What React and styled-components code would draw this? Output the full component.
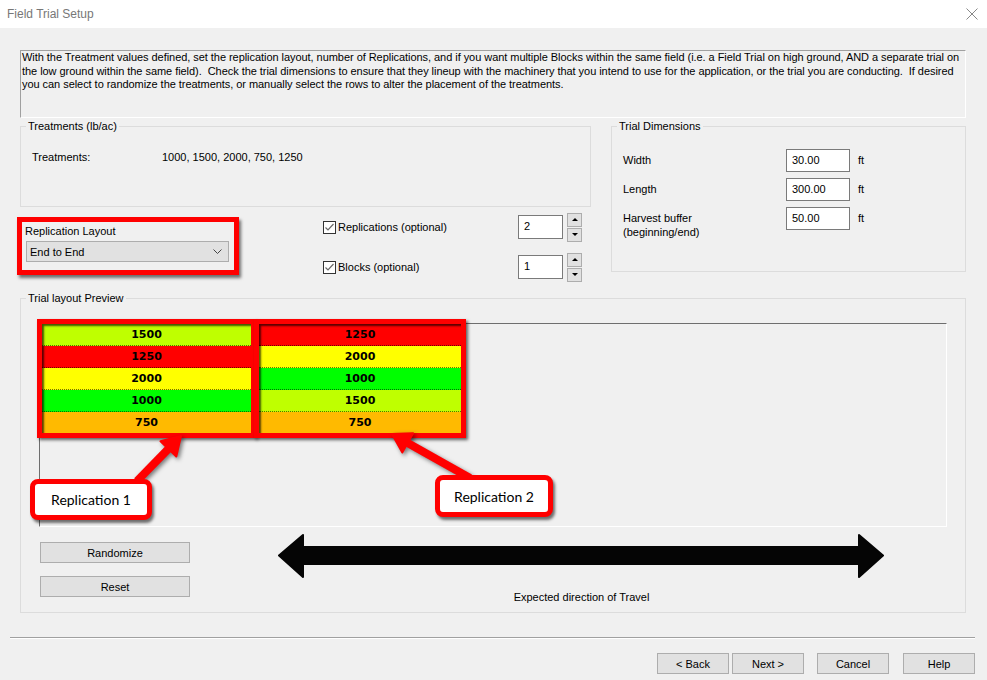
import React from "react";
import styled, { createGlobalStyle } from "styled-components";

const Global = createGlobalStyle`
  html, body { margin: 0; padding: 0; background: #f0f0f0; }
  body { font-family: "Liberation Sans", Arial, sans-serif; font-size: 11px; color: #000; }
  * { box-sizing: border-box; }
`;

const Window = styled.div`
  position: relative;
  width: 987px;
  height: 680px;
  background: #f0f0f0;
  overflow: hidden;
  display: flex;
  flex-direction: column;
`;

const TitleBar = styled.div`
  height: 28px;
  background: #fff;
  display: flex;
  align-items: center;
  justify-content: space-between;
  padding: 0 9px 0 7px;
  font-size: 12px;
  color: #777;
`;

const Body = styled.div`
  padding: 22px 21px 0 20px;
`;

const Description = styled.div`
  height: 68px;
  border-top: 1px solid #a0a0a0;
  border-left: 1px solid #a0a0a0;
  border-right: 1px solid #fff;
  border-bottom: 1px solid #fff;
  padding: 0 1px;
  line-height: 13.5px;
  white-space: pre;
  font-size: 11px;
  letter-spacing: -0.05px;
`;

const TopSection = styled.div`
  display: flex;
  gap: 20px;
  margin-top: 1px;
`;

const LeftCol = styled.div`
  width: 571px;
  display: flex;
  flex-direction: column;
`;

const Group = styled.fieldset`
  margin: 0;
  padding: 0;
  min-width: 0;
  border: 1px solid #dcdcdc;
  width: ${(p) => p.$w}px;
  height: ${(p) => p.$h}px;
`;

const Legend = styled.legend`
  margin-left: 5px;
  padding: 0 2px;
  line-height: 14px;
  font-size: 11px;
`;

const TreatRow = styled.div`
  display: flex;
  margin: 17px 0 0 11px;
  line-height: 14px;
`;

const TreatLabel = styled.div`
  width: 130px;
`;

const OptionsRow = styled.div`
  display: flex;
  align-items: flex-start;
  margin-top: 5px;
`;

const LayoutFrame = styled.div`
  margin: 5px 0 0 -3px;
  width: 222px;
  height: 58px;
  border: 5px solid #f00;
  box-shadow: 2px 3px 3px rgba(0, 0, 0, 0.55);
  padding: 2px 0 0 3px;
`;

const FieldLabel = styled.div`
  line-height: 14px;
`;

const Combo = styled.div`
  margin: 3px 0 0 1px;
  width: 203px;
  height: 21px;
  background: #e1e1e1;
  border: 1px solid #adadad;
  display: flex;
  align-items: center;
  justify-content: space-between;
  padding: 0 6px 0 3px;
`;

const OptionList = styled.div`
  margin-left: 84px;
  display: flex;
  flex-direction: column;
  gap: 10px;
`;

const OptionRow = styled.div`
  display: flex;
  align-items: center;
  height: 30px;
`;

const CheckLabel = styled.label`
  width: 195px;
  display: flex;
  align-items: center;
  gap: 2px;
  line-height: 14px;
`;

const CheckBox = styled.span`
  width: 13px;
  height: 13px;
  border: 1px solid #333;
  background: #fff;
  display: inline-flex;
  align-items: center;
  justify-content: center;
`;

const SpinInput = styled.div`
  width: 45px;
  height: 24px;
  background: #fff;
  border: 1px solid #7a7a7a;
  padding: 3px 0 0 5px;
  line-height: 14px;
`;

const SpinButtons = styled.div`
  margin-left: 4px;
  display: flex;
  flex-direction: column;
  gap: 1px;
`;

const SpinBtn = styled.div`
  width: 15px;
  height: 14px;
  background: #e1e1e1;
  border: 1px solid #adadad;
  display: flex;
  align-items: center;
  justify-content: center;
`;

const Tri = styled.span`
  width: 0;
  height: 0;
  border-left: 3px solid transparent;
  border-right: 3px solid transparent;
  ${(p) => (p.$down ? "border-top: 3px solid #000;" : "border-bottom: 3px solid #000;")}
`;

const DimRows = styled.div`
  margin: 16px 0 0 11px;
  display: flex;
  flex-direction: column;
  gap: 6px;
`;

const DimRow = styled.div`
  display: flex;
  align-items: flex-start;
`;

const DimLabel = styled.div`
  width: 163px;
  padding-top: 4px;
  line-height: 14px;
`;

const DimInput = styled.div`
  width: 64px;
  height: 23px;
  background: #fff;
  border: 1px solid #7a7a7a;
  padding: 3px 0 0 5px;
  line-height: 14px;
`;

const Unit = styled.div`
  margin-left: 8px;
  padding-top: 4px;
  line-height: 14px;
`;

const PreviewGroup = styled(Group)`
  margin-top: 9px;
`;

const Panel = styled.div`
  margin: 18px 0 0 18px;
  width: 908px;
  height: 204px;
  border-top: 1px solid #6e6e6e;
  border-left: 1px solid #6e6e6e;
  border-right: 1px solid #fff;
  border-bottom: 1px solid #fff;
  padding: 0 0 0 2px;
  display: flex;
  gap: 8px;
  align-items: flex-start;
`;

const RepColumn = styled.div`
  position: relative;
  width: ${(p) => p.$w}px;
  display: flex;
  flex-direction: column;
  &::after {
    content: "";
    position: absolute;
    top: -5px;
    left: -5px;
    right: -5px;
    bottom: -4px;
    border: 5px solid #f00;
    box-shadow: 2px 2px 3px rgba(0, 0, 0, 0.6), inset 2px 2px 2px rgba(0, 0, 0, 0.65);
    pointer-events: none;
  }
`;

const Cell = styled.div`
  height: 22px;
  line-height: 21px;
  text-align: center;
  background: ${(p) => p.$bg};
  border-bottom: 1px dotted rgba(0, 0, 0, 0.55);
  font-family: "DejaVu Sans", Verdana, sans-serif;
  font-weight: bold;
  font-size: 11px;
`;

const BottomArea = styled.div`
  display: flex;
  align-items: flex-start;
  margin: 6px 0 0 18px;
`;

const ActionCol = styled.div`
  margin: 9px 0 0 1px;
  display: flex;
  flex-direction: column;
  gap: 13px;
`;

const Button = styled.button`
  width: ${(p) => p.$w || 72}px;
  height: 21px;
  margin: 0;
  padding: 0;
  background: #e1e1e1;
  border: 1px solid #adadad;
  font-family: "Liberation Sans", Arial, sans-serif;
  font-size: 11px;
  color: #000;
`;

const TravelCol = styled.div`
  margin-left: 87px;
  display: flex;
  flex-direction: column;
  align-items: center;
`;

const TravelLabel = styled.div`
  margin-top: 11px;
  line-height: 14px;
`;

const Footer = styled.div`
  margin-top: 24px;
  padding: 0 12px 0 10px;
`;

const Separator = styled.div`
  height: 2px;
  border-top: 1px solid #a0a0a0;
  border-bottom: 1px solid #fff;
`;

const FooterButtons = styled.div`
  margin-top: 14px;
  display: flex;
  justify-content: flex-end;
`;

const Spacer = styled.div`
  width: ${(p) => p.$w}px;
`;

const Callout = styled.div`
  position: absolute;
  left: ${(p) => p.$x}px;
  top: ${(p) => p.$y}px;
  width: ${(p) => p.$w}px;
  height: ${(p) => p.$h}px;
  background: #fff;
  border: 5px solid #f00;
  border-radius: 8px;
  box-shadow: 2px 3px 3px rgba(0, 0, 0, 0.55);
  display: flex;
  align-items: center;
  justify-content: center;
  font-family: Lato, "Open Sans", sans-serif;
  font-size: 14px;
`;

const Overlay = styled.svg`
  position: absolute;
  left: 0;
  top: 0;
  pointer-events: none;
  filter: drop-shadow(2px 2px 2px rgba(0, 0, 0, 0.5));
`;

const rep1 = [
  ["1500", "#bfff00"],
  ["1250", "#ff0000"],
  ["2000", "#ffff00"],
  ["1000", "#00ff00"],
  ["750", "#ffba00"],
];
const rep2 = [
  ["1250", "#ff0000"],
  ["2000", "#ffff00"],
  ["1000", "#00ff00"],
  ["1500", "#bfff00"],
  ["750", "#ffba00"],
];

const Check = () => (
  <CheckBox>
    <svg width="11" height="11" viewBox="0 0 11 11">
      <polyline points="1.5,5.5 4,8 9.5,2" fill="none" stroke="#6a6a6a" strokeWidth="1.2" />
    </svg>
  </CheckBox>
);

const Spinner = ({ value }) => (
  <>
    <SpinInput>{value}</SpinInput>
    <SpinButtons>
      <SpinBtn>
        <Tri />
      </SpinBtn>
      <SpinBtn>
        <Tri $down />
      </SpinBtn>
    </SpinButtons>
  </>
);

export default function App() {
  return (
    <>
      <Global />
      <Window>
        <TitleBar>
          <span>Field Trial Setup</span>
          <svg width="12" height="12" viewBox="0 0 12 12">
            <path d="M0.5 0.5 L11.5 11.5 M11.5 0.5 L0.5 11.5" stroke="#888" strokeWidth="1" />
          </svg>
        </TitleBar>
        <Body>
          <Description>
            {"With the Treatment values defined, set the replication layout, number of Replications, and if you want multiple Blocks within the same field (i.e. a Field Trial on high ground, AND a separate trial on\n" +
              "the low ground within the same field).  Check the trial dimensions to ensure that they lineup with the machinery that you intend to use for the application, or the trial you are conducting.  If desired\n" +
              "you can select to randomize the treatments, or manually select the rows to alter the placement of the treatments."}
          </Description>
          <TopSection>
            <LeftCol>
              <Group $w={571} $h={88}>
                <Legend>Treatments (lb/ac)</Legend>
                <TreatRow>
                  <TreatLabel>Treatments:</TreatLabel>
                  <div>1000, 1500, 2000, 750, 1250</div>
                </TreatRow>
              </Group>
              <OptionsRow>
                <LayoutFrame>
                  <FieldLabel>Replication Layout</FieldLabel>
                  <Combo>
                    <span>End to End</span>
                    <svg width="9" height="6" viewBox="0 0 9 6">
                      <polyline points="0.5,0.5 4.5,4.5 8.5,0.5" fill="none" stroke="#444" strokeWidth="1" />
                    </svg>
                  </Combo>
                </LayoutFrame>
                <OptionList>
                  <OptionRow>
                    <CheckLabel>
                      <Check />
                      Replications (optional)
                    </CheckLabel>
                    <Spinner value="2" />
                  </OptionRow>
                  <OptionRow>
                    <CheckLabel>
                      <Check />
                      Blocks (optional)
                    </CheckLabel>
                    <Spinner value="1" />
                  </OptionRow>
                </OptionList>
              </OptionsRow>
            </LeftCol>
            <Group $w={355} $h={153}>
              <Legend>Trial Dimensions</Legend>
              <DimRows>
                <DimRow>
                  <DimLabel>Width</DimLabel>
                  <DimInput>30.00</DimInput>
                  <Unit>ft</Unit>
                </DimRow>
                <DimRow>
                  <DimLabel>Length</DimLabel>
                  <DimInput>300.00</DimInput>
                  <Unit>ft</Unit>
                </DimRow>
                <DimRow>
                  <DimLabel>
                    Harvest buffer
                    <br />
                    (beginning/end)
                  </DimLabel>
                  <DimInput>50.00</DimInput>
                  <Unit>ft</Unit>
                </DimRow>
              </DimRows>
            </Group>
          </TopSection>
          <PreviewGroup $w={946} $h={322}>
            <Legend>Trial layout Preview</Legend>
            <Panel>
              <RepColumn $w={209}>
                {rep1.map(([v, c], i) => (
                  <Cell key={i} $bg={c}>
                    {v}
                  </Cell>
                ))}
              </RepColumn>
              <RepColumn $w={202}>
                {rep2.map(([v, c], i) => (
                  <Cell key={i} $bg={c}>
                    {v}
                  </Cell>
                ))}
              </RepColumn>
            </Panel>
            <BottomArea>
              <ActionCol>
                <Button $w={150}>Randomize</Button>
                <Button $w={150}>Reset</Button>
              </ActionCol>
              <TravelCol>
                <svg width="609" height="46" viewBox="0 0 609 46">
                  <path
                    d="M2,22.5 L26,2 L26,14 L582,14 L582,2 L606,22.5 L582,44 L582,31 L26,31 L26,44 Z"
                    fill="#050505"
                    stroke="#050505"
                    strokeWidth="2"
                    strokeLinejoin="round"
                  />
                </svg>
                <TravelLabel>Expected direction of Travel</TravelLabel>
              </TravelCol>
            </BottomArea>
          </PreviewGroup>
        </Body>
        <Footer>
          <Separator />
          <FooterButtons>
            <Button>&lt; Back</Button>
            <Spacer $w={3} />
            <Button>Next &gt;</Button>
            <Spacer $w={13} />
            <Button>Cancel</Button>
            <Spacer $w={14} />
            <Button>Help</Button>
          </FooterButtons>
        </Footer>
        <Overlay width="987" height="680" viewBox="0 0 987 680">
          <line x1="137" y1="481" x2="168.4" y2="448.9" stroke="#f00" strokeWidth="8" />
          <polygon points="181,436 176.3,456.6 160.5,441.2" fill="#f00" stroke="#f00" strokeWidth="2" strokeLinejoin="round" />
          <line x1="470" y1="478" x2="407.7" y2="442.9" stroke="#f00" strokeWidth="8" />
          <polygon points="392,434 413.1,433.3 402.3,452.5" fill="#f00" stroke="#f00" strokeWidth="2" strokeLinejoin="round" />
        </Overlay>
        <Callout $x={30} $y={479} $w={122} $h={41}>Replication 1</Callout>
        <Callout $x={435} $y={475} $w={118} $h={42}>Replication 2</Callout>
      </Window>
    </>
  );
}
